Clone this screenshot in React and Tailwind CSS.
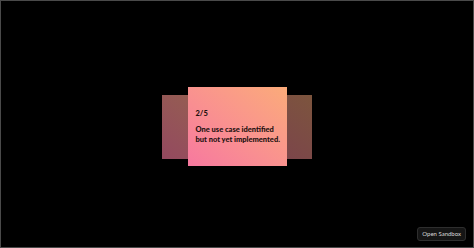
export default function App() {
  return (
    <div className="relative flex h-[248px] w-[474px] items-center justify-center border border-[#4a4a4a] bg-black pt-[5px] font-['Lato',sans-serif]">
      <div className="relative h-[79px] w-[99px]">
        <div className="absolute left-[-26px] top-[8px] h-[64px] w-[80px] bg-gradient-to-tr from-[#f6799f] to-[#f9a97a] opacity-60" />
        <div className="absolute right-[-25px] top-[8px] h-[64px] w-[80px] bg-gradient-to-tr from-[#f6799f] to-[#f9a97a] opacity-50" />
        <div className="relative flex h-full w-full flex-col bg-gradient-to-tr from-[#f7789f] to-[#fbab79] px-[8px] pt-[22px] text-[#22100f]">
          <div className="text-[7.5px] font-black leading-[9px]">2/5</div>
          <div className="mt-[7px] whitespace-nowrap text-[7.5px] font-black leading-[10px]">
            One use case identified
            <br />
            but not yet implemented.
          </div>
        </div>
      </div>
      <button className="absolute bottom-[6px] right-[7px] rounded-[3px] border border-[#2e2e2e] bg-[#151515] px-[4px] py-[2px] text-[6px] leading-[8px] text-[#d8d8d8]">
        Open Sandbox
      </button>
    </div>
  );
}
